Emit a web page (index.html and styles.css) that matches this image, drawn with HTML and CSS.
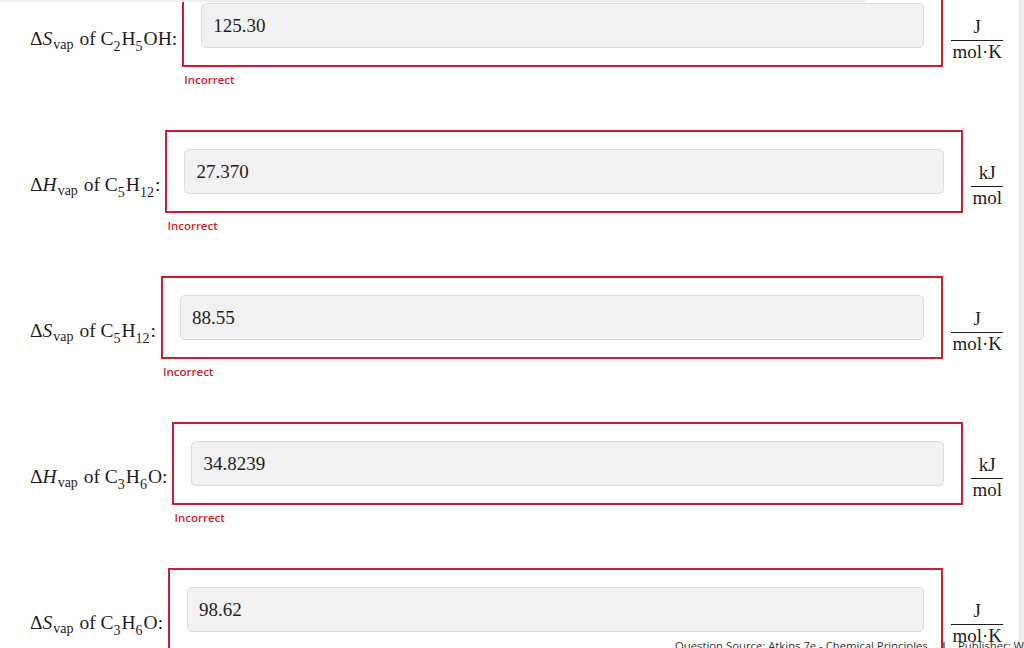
FILE: index.html
```html
<!DOCTYPE html>
<html lang="en">
<head>
<meta charset="utf-8">
<title>Vaporization answers</title>
<link rel="stylesheet" href="styles.css">
</head>
<body>
<div class="topbar"></div>
<div class="page">
  <div class="list">
    <div class="row">
      <div class="label"><span class="up">Δ</span><i>S</i><sub class="vap">vap</sub> of C<sub class="n">2</sub>H<sub class="n">5</sub>OH:</div>
      <div class="answer">
        <div class="box"><div class="field">125.30</div></div>
        <div class="status">Incorrect</div>
      </div>
      <div class="unit"><span class="num">J</span><span class="den">mol·K</span></div>
    </div>
    <div class="row">
      <div class="label"><span class="up">Δ</span><i>H</i><sub class="vap">vap</sub> of C<sub class="n">5</sub>H<sub class="n">12</sub>:</div>
      <div class="answer">
        <div class="box"><div class="field">27.370</div></div>
        <div class="status">Incorrect</div>
      </div>
      <div class="unit"><span class="num">kJ</span><span class="den">mol</span></div>
    </div>
    <div class="row">
      <div class="label"><span class="up">Δ</span><i>S</i><sub class="vap">vap</sub> of C<sub class="n">5</sub>H<sub class="n">12</sub>:</div>
      <div class="answer">
        <div class="box"><div class="field">88.55</div></div>
        <div class="status">Incorrect</div>
      </div>
      <div class="unit"><span class="num">J</span><span class="den">mol·K</span></div>
    </div>
    <div class="row">
      <div class="label"><span class="up">Δ</span><i>H</i><sub class="vap">vap</sub> of C<sub class="n">3</sub>H<sub class="n">6</sub>O:</div>
      <div class="answer">
        <div class="box"><div class="field">34.8239</div></div>
        <div class="status">Incorrect</div>
      </div>
      <div class="unit"><span class="num">kJ</span><span class="den">mol</span></div>
    </div>
    <div class="row">
      <div class="label"><span class="up">Δ</span><i>S</i><sub class="vap">vap</sub> of C<sub class="n">3</sub>H<sub class="n">6</sub>O:</div>
      <div class="answer">
        <div class="box"><div class="field">98.62</div></div>
        <div class="status">Incorrect</div>
      </div>
      <div class="unit"><span class="num">J</span><span class="den">mol·K</span></div>
    </div>
  </div>
</div>
<div class="rail"></div>
<div class="footer">Question Source: Atkins 7e - Chemical Principles<span class="sep">|</span>Publisher: W. H. Freeman</div>
</body>
</html>
```

FILE: styles.css
```css
html, body {
  margin: 0;
  padding: 0;
  height: 100%;
  overflow: hidden;
  background: #ffffff;
}

body {
  display: flex;
  font-family: "Liberation Serif", "Times New Roman", serif;
  color: #1e1e1e;
}

.topbar {
  position: absolute;
  top: 0;
  left: 0;
  width: 866px;
  height: 2px;
  background: #f0f0f0;
  border-bottom-right-radius: 2px;
  z-index: 2;
}

.page {
  flex: 1;
  padding: 0 16px 0 30px;
}

.rail {
  width: 4px;
  background: #f1f1f1;
  border-left: 1px solid #e4e4e4;
}

.list {
  margin-top: -16px;
}

.row {
  display: flex;
  align-items: center;
  gap: 5px;
  margin-bottom: 42px;
}

.label {
  font-size: 19.5px;
  line-height: 22px;
  white-space: nowrap;
  margin-top: 5px;
}

.label i {
  font-style: italic;
}

.label sub {
  line-height: 0;
  font-size: 14px;
}

.label sub.vap {
  vertical-align: -4px;
  margin-left: 1px;
  margin-right: 1px;
}

.label sub.n {
  vertical-align: -6px;
  margin-right: 1px;
}

.answer {
  flex: 1;
}

.box {
  border: 2px solid #cf1c2e;
  padding: 17px;
}

.field {
  box-sizing: border-box;
  height: 45px;
  display: flex;
  align-items: center;
  padding-left: 11px;
  background: #f2f2f2;
  border: 1px solid #dcdcdc;
  border-radius: 5px;
  font-size: 19px;
  color: #1e1e1e;
}

.status {
  margin-top: 5px;
  padding-left: 2px;
  font-family: "Open Sans", "Liberation Sans", sans-serif;
  font-weight: 600;
  font-size: 11.5px;
  line-height: 16px;
  color: #cf1c2e;
}

.unit {
  display: flex;
  flex-direction: column;
  align-items: center;
  margin-top: 6px;
  margin-left: 3px;
  font-size: 19px;
  white-space: nowrap;
}

.num {
  align-self: stretch;
  text-align: center;
  line-height: 20px;
  padding-bottom: 3px;
  border-bottom: 1px solid #1e1e1e;
}

.den {
  line-height: 20px;
  padding: 1px 1px 0;
}

.footer {
  position: absolute;
  top: 638px;
  left: 675px;
  white-space: nowrap;
  font-family: "Open Sans", "Liberation Sans", sans-serif;
  font-size: 11.3px;
  color: #333333;
}

.sep {
  margin: 0 11px 0 13px;
  font-weight: 700;
}
```
